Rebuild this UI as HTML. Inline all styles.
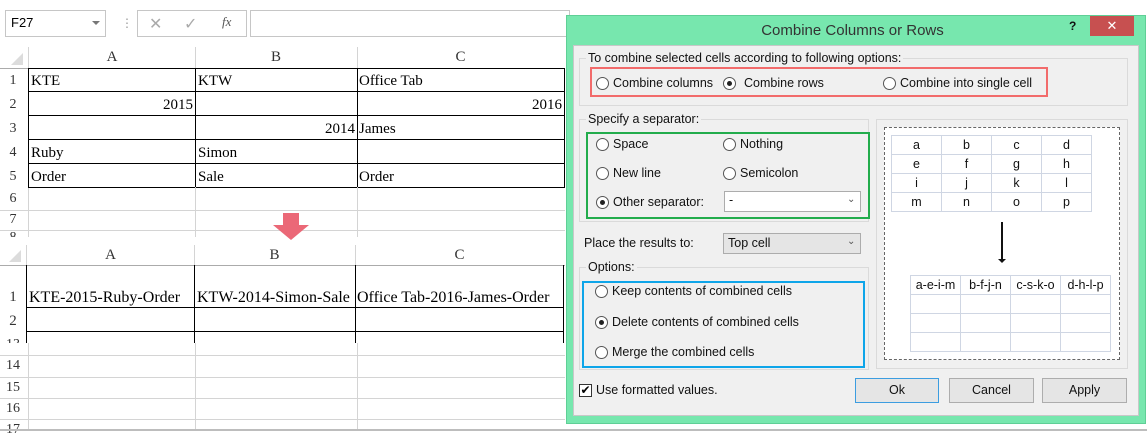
<!DOCTYPE html>
<html><head><meta charset="utf-8"><style>
*{margin:0;padding:0;box-sizing:border-box}
body{width:1147px;height:431px;overflow:hidden;background:#fff;position:relative;font-family:"Liberation Serif",serif}
.a{position:absolute}
.hl{position:absolute;height:1px;background:#d4d4d4}
.vl{position:absolute;width:1px;background:#d4d4d4}
.bl{position:absolute;height:1px;background:#000}
.bv{position:absolute;width:1px;background:#000}
.t{position:absolute;font-size:15px;line-height:16px;color:#000}
.t2{position:absolute;font-size:16px;line-height:16px;color:#000}
.hd{position:absolute;font-size:14px;color:#333;text-align:center}
.rn{position:absolute;font-size:14px;color:#333;width:26px;text-align:center}
.d{font-family:"Liberation Sans",sans-serif;font-size:12.5px;color:#111}
.r{position:absolute;width:13px;height:13px;border:1px solid #555;border-radius:50%;background:#fff}
.r.on::after{content:"";position:absolute;left:3px;top:3px;width:5px;height:5px;border-radius:50%;background:#222}
.grp{position:absolute;border:1px solid #dadada}
.sel{position:absolute;background:#fff;border:1px solid #acacac}
.btn{position:absolute;height:25px;background:#e5e5e5;border:1px solid #adadad;text-align:center;line-height:23px}
table.p{position:absolute;border-collapse:collapse;table-layout:fixed;font-family:"Liberation Sans",sans-serif;font-size:12.5px;color:#111}
table.p td{border:1px solid #cfd6e3;text-align:center;height:19px;padding:0;width:50px}
</style></head><body>
<!-- formula bar -->
<div class="a" style="left:5px;top:10px;width:101px;height:27px;border:1px solid #c6c6c6"></div>
<div class="t" style="left:11px;top:15px;font-family:'Liberation Sans',sans-serif;font-size:13px">F27</div>
<div class="a" style="left:92px;top:21px;border-left:4px solid transparent;border-right:4px solid transparent;border-top:4px solid #777"></div>
<div class="a" style="left:121px;top:16px;color:#999;font-size:12px">⋮</div>
<div class="a" style="left:137px;top:10px;width:110px;height:27px;border:1px solid #c6c6c6"></div>
<div class="a" style="left:149px;top:14px;color:#aaa;font-size:16px;font-family:'Liberation Sans'">✕</div>
<div class="a" style="left:184px;top:14px;color:#aaa;font-size:16px">✓</div>
<div class="a" style="left:222px;top:14px;color:#555;font-size:13px;font-style:italic">fx</div>
<div class="a" style="left:250px;top:10px;width:320px;height:27px;border:1px solid #c6c6c6"></div>
<!-- top sheet -->
<div class="a" style="left:0;top:47px;width:565px;height:21px;background:#fff"></div>
<div class="a" style="left:11px;top:53px;border-left:12px solid transparent;border-bottom:12px solid #dcdcdc"></div>
<div class="hd" style="left:29px;top:49px;width:166px;font-size:15px">A</div>
<div class="hd" style="left:195px;top:49px;width:162px;font-size:15px">B</div>
<div class="hd" style="left:357px;top:49px;width:207px;font-size:15px">C</div>
<div class="hl" style="left:0;top:68px;width:565px;background:#ababab"></div>
<div class="vl" style="left:28px;top:47px;height:190px"></div>
<div class="vl" style="left:195px;top:47px;height:21px"></div>
<div class="vl" style="left:357px;top:47px;height:21px"></div>
<div class="bl" style="left:28px;top:68px;width:536px"></div>
<div class="bl" style="left:28px;top:91px;width:536px"></div>
<div class="bl" style="left:28px;top:115px;width:536px"></div>
<div class="bl" style="left:28px;top:139px;width:536px"></div>
<div class="bl" style="left:28px;top:163px;width:536px"></div>
<div class="bl" style="left:28px;top:187px;width:536px"></div>
<div class="bv" style="left:28px;top:68px;height:120px"></div>
<div class="bv" style="left:195px;top:68px;height:120px"></div>
<div class="bv" style="left:357px;top:68px;height:120px"></div>
<div class="bv" style="left:564px;top:68px;height:120px"></div>
<div class="hl" style="left:0;top:210px;width:565px"></div>
<div class="hl" style="left:0;top:230px;width:565px"></div>
<div class="vl" style="left:195px;top:187px;height:50px"></div>
<div class="vl" style="left:357px;top:187px;height:50px"></div>
<div class="rn" style="left:0;top:73px">1</div><div class="rn" style="left:0;top:97px">2</div>
<div class="rn" style="left:0;top:121px">3</div><div class="rn" style="left:0;top:145px">4</div>
<div class="rn" style="left:0;top:169px">5</div><div class="rn" style="left:0;top:191px">6</div>
<div class="rn" style="left:0;top:212px">7</div><div class="rn" style="left:0;top:230px;height:7px;overflow:hidden">8</div>
<div class="t" style="left:31px;top:73px">KTE</div><div class="t" style="left:198px;top:73px">KTW</div><div class="t" style="left:359px;top:73px">Office Tab</div>
<div class="t" style="left:100px;top:97px;width:93px;text-align:right">2015</div><div class="t" style="left:460px;top:97px;width:102px;text-align:right">2016</div>
<div class="t" style="left:260px;top:121px;width:95px;text-align:right">2014</div><div class="t" style="left:359px;top:121px">James</div>
<div class="t" style="left:31px;top:145px">Ruby</div><div class="t" style="left:198px;top:145px">Simon</div>
<div class="t" style="left:31px;top:169px">Order</div><div class="t" style="left:198px;top:169px">Sale</div><div class="t" style="left:359px;top:169px">Order</div>
<!-- arrow -->
<div class="a" style="left:283px;top:213px;width:16px;height:12px;background:#eb6877"></div>
<div class="a" style="left:273px;top:225px;border-left:18px solid transparent;border-right:18px solid transparent;border-top:15px solid #eb6877"></div>
<!-- bottom sheet -->
<div class="a" style="left:0;top:245px;width:565px;height:98px;background:#fff"></div>
<div class="a" style="left:9px;top:250px;border-left:12px solid transparent;border-bottom:12px solid #dcdcdc"></div>
<div class="hd" style="left:27px;top:247px;width:167px;font-size:15px">A</div>
<div class="hd" style="left:194px;top:247px;width:161px;font-size:15px">B</div>
<div class="hd" style="left:355px;top:247px;width:209px;font-size:15px">C</div>
<div class="hl" style="left:0;top:265px;width:565px;background:#ababab"></div>
<div class="vl" style="left:26px;top:245px;height:20px"></div>
<div class="vl" style="left:194px;top:245px;height:20px"></div>
<div class="vl" style="left:355px;top:245px;height:20px"></div>
<div class="bl" style="left:26px;top:307px;width:538px"></div>
<div class="bl" style="left:26px;top:331px;width:538px"></div>
<div class="bv" style="left:26px;top:265px;height:78px"></div>
<div class="bv" style="left:194px;top:265px;height:78px"></div>
<div class="bv" style="left:355px;top:265px;height:78px"></div>
<div class="bv" style="left:563px;top:265px;height:78px"></div>
<div class="rn" style="left:0;top:289px;font-size:15px">1</div><div class="rn" style="left:0;top:313px;font-size:15px">2</div>
<div class="rn" style="left:0;top:337px;height:6px;overflow:hidden">13</div>
<div class="t2" style="left:29px;top:290px">KTE-2015-Ruby-Order</div>
<div class="t2" style="left:197px;top:290px">KTW-2014-Simon-Sale</div>
<div class="t2" style="left:357px;top:290px">Office Tab-2016-James-Order</div>
<div class="vl" style="left:28px;top:343px;height:88px"></div>
<div class="vl" style="left:195px;top:343px;height:88px"></div>
<div class="vl" style="left:357px;top:343px;height:88px"></div>
<div class="hl" style="left:0;top:355px;width:565px"></div>
<div class="hl" style="left:0;top:377px;width:565px"></div>
<div class="hl" style="left:0;top:398px;width:565px"></div>
<div class="hl" style="left:0;top:419px;width:565px"></div>
<div class="rn" style="left:0;top:358px">14</div><div class="rn" style="left:0;top:380px">15</div><div class="rn" style="left:0;top:401px">16</div><div class="rn" style="left:0;top:422px">17</div>
<div class="a" style="left:0;top:429px;width:1147px;height:2px;background:#bdbdbd"></div>
<!-- dialog -->
<div class="a d" style="left:566px;top:15px;width:580px;height:409px;background:#77e7ae;border:1px solid #5fcf96"></div>
<div class="a d" style="left:573px;top:45px;width:566px;height:371px;background:#f0f0f0;border:1px solid #c8c8c8"></div>
<div class="a d" style="left:700px;top:22px;width:305px;text-align:center;font-size:15px;color:#333">Combine Columns or Rows</div>
<div class="a d" style="left:1069px;top:19px;font-weight:bold;font-size:12px">?</div>
<div class="a d" style="left:1090px;top:16px;width:44px;height:20px;background:#c75050;color:#fff;text-align:center;line-height:20px;font-size:13px">✕</div>
<div class="grp" style="left:579px;top:58px;width:549px;height:48px"></div>
<div class="a d" style="left:586px;top:51px;background:#f0f0f0;padding:0 2px">To combine selected cells according to following options:</div>
<div class="a" style="left:590px;top:67px;width:458px;height:30px;border:2px solid #f26b6b"></div>
<div class="r" style="left:596px;top:77px"></div><div class="a d" style="left:613px;top:76px">Combine columns</div>
<div class="r on" style="left:723px;top:77px"></div><div class="a d" style="left:744px;top:76px">Combine rows</div>
<div class="r" style="left:883px;top:77px"></div><div class="a d" style="left:900px;top:76px">Combine into single cell</div>
<div class="grp" style="left:579px;top:119px;width:290px;height:103px"></div>
<div class="a d" style="left:586px;top:112px;background:#f0f0f0;padding:0 2px">Specify a separator:</div>
<div class="a" style="left:586px;top:132px;width:284px;height:87px;border:2px solid #22ac4c"></div>
<div class="r" style="left:596px;top:138px"></div><div class="a d" style="left:613px;top:137px">Space</div>
<div class="r" style="left:723px;top:138px"></div><div class="a d" style="left:740px;top:137px">Nothing</div>
<div class="r" style="left:596px;top:167px"></div><div class="a d" style="left:613px;top:166px">New line</div>
<div class="r" style="left:723px;top:167px"></div><div class="a d" style="left:740px;top:166px">Semicolon</div>
<div class="r on" style="left:596px;top:196px"></div><div class="a d" style="left:613px;top:195px">Other separator:</div>
<div class="sel" style="left:724px;top:191px;width:137px;height:21px"></div><div class="a d" style="left:729px;top:193px">-</div>
<div class="a d" style="left:847px;top:194px;font-size:10px;color:#555">⌄</div>
<div class="a d" style="left:584px;top:236px">Place the results to:</div>
<div class="sel" style="left:723px;top:233px;width:138px;height:21px;background:#e5e5e5"></div>
<div class="a d" style="left:728px;top:236px">Top cell</div><div class="a d" style="left:847px;top:236px;font-size:10px;color:#555">⌄</div>
<div class="grp" style="left:579px;top:267px;width:290px;height:103px"></div>
<div class="a d" style="left:586px;top:260px;background:#f0f0f0;padding:0 2px">Options:</div>
<div class="a" style="left:582px;top:281px;width:283px;height:87px;border:2px solid #0ea5e9"></div>
<div class="r" style="left:595px;top:285px"></div><div class="a d" style="left:612px;top:284px">Keep contents of combined cells</div>
<div class="r on" style="left:595px;top:316px"></div><div class="a d" style="left:612px;top:315px">Delete contents of combined cells</div>
<div class="r" style="left:595px;top:346px"></div><div class="a d" style="left:612px;top:345px">Merge the combined cells</div>
<div class="grp" style="left:876px;top:119px;width:252px;height:250px"></div>
<div class="a" style="left:884px;top:127px;width:236px;height:233px;background:#fff;border:1px dashed #666"></div>
<table class="p" style="left:891px;top:135px;width:201px"><tr><td>a</td><td>b</td><td>c</td><td>d</td></tr><tr><td>e</td><td>f</td><td>g</td><td>h</td></tr><tr><td>i</td><td>j</td><td>k</td><td>l</td></tr><tr><td>m</td><td>n</td><td>o</td><td>p</td></tr></table>
<div class="a" style="left:1001px;top:222px;width:2px;height:38px;background:#111"></div>
<div class="a" style="left:998px;top:259px;border-left:4px solid transparent;border-right:4px solid transparent;border-top:4px solid #111"></div>
<table class="p" style="left:910px;top:275px;width:201px"><tr><td>a-e-i-m</td><td>b-f-j-n</td><td>c-s-k-o</td><td>d-h-l-p</td></tr><tr><td></td><td></td><td></td><td></td></tr><tr><td></td><td></td><td></td><td></td></tr><tr><td></td><td></td><td></td><td></td></tr></table>
<div class="a" style="left:579px;top:384px;width:13px;height:13px;background:#fff;border:1px solid #333;font-size:12px;line-height:11px;text-align:center;font-family:'DejaVu Sans'">✔</div>
<div class="a d" style="left:596px;top:383px">Use formatted values.</div>
<div class="btn d" style="left:855px;top:378px;width:84px;border-color:#3c9de0">Ok</div>
<div class="btn d" style="left:949px;top:378px;width:85px">Cancel</div>
<div class="btn d" style="left:1042px;top:378px;width:85px">Apply</div>
</body></html>
